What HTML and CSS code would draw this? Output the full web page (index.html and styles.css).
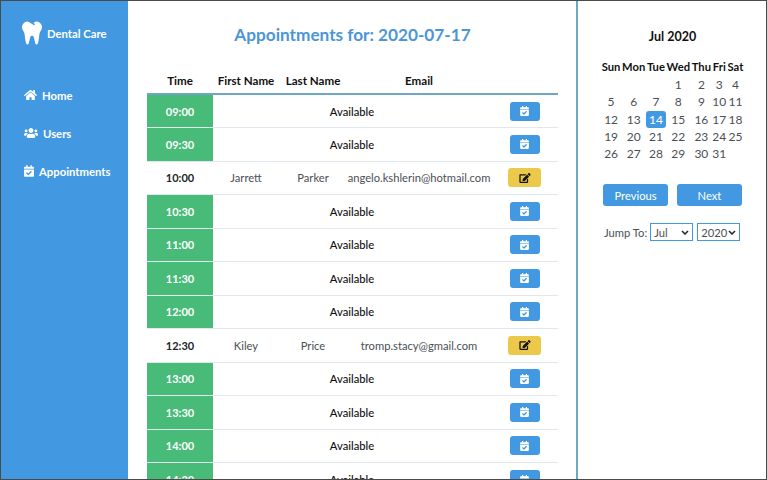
FILE: index.html
```html
<!DOCTYPE html>
<html lang="en">
<head>
  <meta charset="UTF-8">
  <meta name="viewport" content="width=device-width, initial-scale=1.0">
  <title>Dental Care - Appointments</title>
  <link rel="stylesheet" href="styles.css">
</head>
<body>
  <svg class="icon-defs" width="0" height="0">
    <symbol id="i-check" viewBox="0 0 448 512"><path d="M436 160H12c-6.6 0-12-5.4-12-12v-36c0-26.5 21.5-48 48-48h48V12c0-6.6 5.4-12 12-12h40c6.6 0 12 5.4 12 12v52h128V12c0-6.6 5.4-12 12-12h40c6.6 0 12 5.4 12 12v52h48c26.5 0 48 21.5 48 48v36c0 6.6-5.4 12-12 12zM12 192h424c6.6 0 12 5.4 12 12v260c0 26.5-21.5 48-48 48H48c-26.5 0-48-21.5-48-48V204c0-6.6 5.4-12 12-12zm333.3 95.9l-28.2-28.4c-4.7-4.7-12.3-4.7-17-.1L194 364.3l-46.1-46.5c-4.7-4.7-12.3-4.7-17-.1l-28.4 28.2c-4.7 4.7-4.7 12.3-.1 17l82.6 83.3c4.7 4.7 12.3 4.7 17 .1l143.2-142c4.7-4.7 4.7-12.3.1-17z"/></symbol>
    <symbol id="i-edit" viewBox="0 0 576 512"><path d="M402.6 83.2l90.2 90.2c3.8 3.8 3.8 10 0 13.8L274.4 405.6l-92.8 10.3c-12.4 1.4-22.9-9.1-21.5-21.5l10.3-92.8L388.8 83.2c3.8-3.8 10-3.8 13.8 0zm162-22.9l-48.8-48.8c-15.2-15.2-39.9-15.2-55.2 0l-35.4 35.4c-3.8 3.8-3.8 10 0 13.8l90.2 90.2c3.8 3.8 10 3.8 13.8 0l35.4-35.4c15.2-15.3 15.2-40 0-55.2zM384 346.2V448H64V128h229.8c3.2 0 6.2-1.3 8.5-3.5l40-40c7.6-7.6 2.2-20.5-8.5-20.5H48C21.5 64 0 85.5 0 112v352c0 26.5 21.5 48 48 48h352c26.5 0 48-21.5 48-48V306.2c0-10.7-12.9-16-20.5-8.5l-40 40c-2.2 2.3-3.5 5.3-3.5 8.5z"/></symbol>
  </svg>

  <div class="app">
    <!-- Sidebar -->
    <nav class="sidebar">
      <div class="brand">
        <svg class="brand-icon" viewBox="0 0 448 512"><path d="M443.98 96.25c-11.01-45.22-47.11-82.06-92.01-93.72-32.19-8.36-63 5.1-89.14 24.33-3.25 2.39-6.96 3.73-10.5 5.48l28.32 18.21c7.42 4.77 9.58 14.67 4.8 22.11-4.46 6.95-14.27 9.86-22.11 4.8L162.83 12.84c-20.7-10.85-43.38-16.4-66.81-10.31-44.9 11.67-81 48.5-92.01 93.72-10.13 41.62-.42 80.81 21.5 110.43 23.36 31.57 32.68 68.66 36.29 107.35 4.4 47.16 10.33 94.16 20.94 140.32l7.8 33.95c3.19 13.87 15.49 23.7 29.67 23.7 13.97 0 26.15-9.55 29.54-23.16l34.47-138.42c4.56-18.32 20.96-31.16 39.76-31.16s35.2 12.85 39.76 31.16l34.47 138.42c3.39 13.61 15.57 23.16 29.54 23.16 14.18 0 26.48-9.83 29.67-23.7l7.8-33.95c10.61-46.15 16.53-93.16 20.94-140.32 3.61-38.7 12.93-75.78 36.29-107.35 21.95-29.61 31.66-68.8 21.53-110.43z"/></svg>
        <span>Dental Care</span>
      </div>
      <a class="nav-link" href="#">
        <svg class="nav-icon" viewBox="0 0 576 512"><path d="M280.37 148.26L96 300.11V464a16 16 0 0 0 16 16l112.06-.29a16 16 0 0 0 15.92-16V368a16 16 0 0 1 16-16h64a16 16 0 0 1 16 16v95.64a16 16 0 0 0 16 16.05L464 480a16 16 0 0 0 16-16V300L295.67 148.26a12.19 12.19 0 0 0-15.3 0zM571.6 251.47L488 182.56V44.05a12 12 0 0 0-12-12h-56a12 12 0 0 0-12 12v72.61L318.47 43a48 48 0 0 0-61 0L4.34 251.47a12 12 0 0 0-1.6 16.9l25.5 31A12 12 0 0 0 45.15 301l235.22-193.74a12.19 12.19 0 0 1 15.3 0L530.9 301a12 12 0 0 0 16.9-1.6l25.5-31a12 12 0 0 0-1.7-16.93z"/></svg>
        Home
      </a>
      <a class="nav-link" href="#">
        <svg class="nav-icon nav-icon-wide" viewBox="0 0 640 512"><path d="M96 224c35.3 0 64-28.7 64-64s-28.7-64-64-64-64 28.7-64 64 28.7 64 64 64zm448 0c35.3 0 64-28.7 64-64s-28.7-64-64-64-64 28.7-64 64 28.7 64 64 64zm32 32h-64c-17.6 0-33.5 7.1-45.1 18.6 40.3 22.1 68.9 62 75.1 109.4h66c17.7 0 32-14.3 32-32v-32c0-35.3-28.7-64-64-64zm-256 0c61.9 0 112-50.1 112-112S381.9 32 320 32 208 82.1 208 144s50.1 112 112 112zm76.8 32h-8.3c-20.8 10-43.9 16-68.5 16s-47.6-6-68.5-16h-8.3C179.6 288 128 339.6 128 403.2V432c0 26.5 21.5 48 48 48h288c26.5 0 48-21.5 48-48v-28.8c0-63.6-51.6-115.2-115.2-115.2zm-223.7-13.4C161.5 263.1 145.6 256 128 256H64c-35.3 0-64 28.7-64 64v32c0 17.7 14.3 32 32 32h65.9c6.3-47.4 34.9-87.3 75.2-109.4z"/></svg>
        Users
      </a>
      <a class="nav-link" href="#">
        <svg class="nav-icon nav-icon-narrow"><use href="#i-check"/></svg>
        Appointments
      </a>
    </nav>

    <!-- Schedule -->
    <main class="schedule">
      <h1>Appointments for: 2020-07-17</h1>
      <table class="slots">
        <thead>
          <tr><th>Time</th><th>First Name</th><th>Last Name</th><th>Email</th><th></th></tr>
        </thead>
        <tbody>
          <tr><td class="time free">09:00</td><td colspan="3" class="avail">Available</td><td><button class="btn-slot"><svg><use href="#i-check"/></svg></button></td></tr>
          <tr><td class="time free">09:30</td><td colspan="3" class="avail">Available</td><td><button class="btn-slot"><svg><use href="#i-check"/></svg></button></td></tr>
          <tr><td class="time">10:00</td><td>Jarrett</td><td>Parker</td><td>angelo.kshlerin@hotmail.com</td><td><button class="btn-slot btn-edit"><svg><use href="#i-edit"/></svg></button></td></tr>
          <tr><td class="time free">10:30</td><td colspan="3" class="avail">Available</td><td><button class="btn-slot"><svg><use href="#i-check"/></svg></button></td></tr>
          <tr><td class="time free">11:00</td><td colspan="3" class="avail">Available</td><td><button class="btn-slot"><svg><use href="#i-check"/></svg></button></td></tr>
          <tr><td class="time free">11:30</td><td colspan="3" class="avail">Available</td><td><button class="btn-slot"><svg><use href="#i-check"/></svg></button></td></tr>
          <tr><td class="time free">12:00</td><td colspan="3" class="avail">Available</td><td><button class="btn-slot"><svg><use href="#i-check"/></svg></button></td></tr>
          <tr><td class="time">12:30</td><td>Kiley</td><td>Price</td><td>tromp.stacy@gmail.com</td><td><button class="btn-slot btn-edit"><svg><use href="#i-edit"/></svg></button></td></tr>
          <tr><td class="time free">13:00</td><td colspan="3" class="avail">Available</td><td><button class="btn-slot"><svg><use href="#i-check"/></svg></button></td></tr>
          <tr><td class="time free">13:30</td><td colspan="3" class="avail">Available</td><td><button class="btn-slot"><svg><use href="#i-check"/></svg></button></td></tr>
          <tr><td class="time free">14:00</td><td colspan="3" class="avail">Available</td><td><button class="btn-slot"><svg><use href="#i-check"/></svg></button></td></tr>
          <tr><td class="time free">14:30</td><td colspan="3" class="avail">Available</td><td><button class="btn-slot"><svg><use href="#i-check"/></svg></button></td></tr>
        </tbody>
      </table>
    </main>

    <!-- Calendar -->
    <aside class="calendar">
      <h2>Jul 2020</h2>
      <table class="month">
        <thead>
          <tr><th>Sun</th><th>Mon</th><th>Tue</th><th>Wed</th><th>Thu</th><th>Fri</th><th>Sat</th></tr>
        </thead>
        <tbody>
          <tr><td></td><td></td><td></td><td>1</td><td>2</td><td>3</td><td>4</td></tr>
          <tr><td>5</td><td>6</td><td>7</td><td>8</td><td>9</td><td>10</td><td>11</td></tr>
          <tr><td>12</td><td>13</td><td class="today">14</td><td>15</td><td>16</td><td>17</td><td>18</td></tr>
          <tr><td>19</td><td>20</td><td>21</td><td>22</td><td>23</td><td>24</td><td>25</td></tr>
          <tr><td>26</td><td>27</td><td>28</td><td>29</td><td>30</td><td>31</td><td></td></tr>
        </tbody>
      </table>
      <div class="month-nav">
        <button class="btn-month">Previous</button>
        <button class="btn-month">Next</button>
      </div>
      <div class="jump">
        <label for="jump-month">Jump To:</label>
        <select id="jump-month" class="jump-month"><option>Jul</option></select>
        <select class="jump-year"><option>2020</option></select>
      </div>
    </aside>
  </div>
</body>
</html>
```

FILE: styles.css
```css
:root {
  --blue: #4299e1;
  --green: #48bb78;
  --yellow: #ecc94b;
  --line: #e2e8f0;
  --text-main: #212529;
  --text-soft: #4a4f55;
}

* {
  box-sizing: border-box;
  margin: 0;
  padding: 0;
}

html,
body {
  height: 100%;
  overflow: hidden;
}

body {
  font-family: Lato, "Open Sans", sans-serif;
  font-size: 11.2px;
  color: var(--text-main);
  background-color: #fff;
}

.icon-defs {
  position: absolute;
}

.app {
  display: flex;
  height: 100%;
  overflow: hidden;
  border: 1px solid #4a4a4a;
}

/* Sidebar */
.sidebar {
  flex: 0 0 127px;
  padding-top: 20px;
  color: #fff;
  background-color: var(--blue);
}

.brand {
  display: flex;
  align-items: center;
  gap: 5px;
  margin: 0 0 31px 21px;
  font-size: 11.3px;
  font-weight: 700;
}

.brand-icon {
  width: 20px;
  height: 24px;
  fill: #fff;
}

.nav-link {
  display: flex;
  align-items: center;
  gap: 5px;
  height: 38px;
  padding-left: 23px;
  font-size: 11.3px;
  font-weight: 700;
  color: #fff;
  text-decoration: none;
}

.nav-icon {
  width: 13px;
  height: 12px;
  fill: #fff;
}

.nav-icon-wide {
  width: 14px;
}

.nav-icon-narrow {
  width: 10px;
}

/* Schedule */
.schedule {
  flex: 0 0 450px;
  padding: 0 18px 0 19px;
  border-right: 2px solid #6fa6c4;
  overflow: hidden;
}

h1 {
  height: 67px;
  padding-top: 22px;
  font-size: 17.2px;
  font-weight: 700;
  line-height: 24px;
  text-align: center;
  color: #4b96d6;
}

.slots {
  width: 411px;
  table-layout: fixed;
  border-collapse: collapse;
  text-align: center;
}

.slots th {
  height: 26px;
  font-size: 11.6px;
  font-weight: 700;
  color: #111;
  border-bottom: 2px solid #6fa6c4;
}

.slots th:nth-child(1) { width: 66px; }
.slots th:nth-child(2) { width: 66px; }
.slots th:nth-child(3) { width: 68px; }
.slots th:nth-child(4) { width: 144px; }

.slots td {
  height: 33.5px;
  color: var(--text-soft);
  border-top: 1px solid var(--line);
  vertical-align: middle;
}

.slots .time {
  font-size: 11px;
  font-weight: 700;
  color: var(--text-main);
}

.slots .free {
  color: #fff;
  background-color: var(--green);
}

.slots .avail {
  font-weight: 500;
  color: #111;
}

.btn-slot {
  display: inline-flex;
  align-items: center;
  justify-content: center;
  width: 30px;
  height: 19px;
  vertical-align: middle;
  border: none;
  border-radius: 3px;
  background-color: var(--blue);
}

.btn-slot svg {
  width: 9px;
  height: 10px;
  fill: #fff;
}

.btn-edit {
  width: 33px;
  background-color: var(--yellow);
}

.btn-edit svg {
  width: 12px;
  fill: #111;
}

/* Calendar */
.calendar {
  flex: 1;
  padding: 27px 0 0 23px;
}

h2 {
  width: 143px;
  font-size: 12.5px;
  font-weight: 700;
  line-height: 18px;
  text-align: center;
  color: #111;
}

.month {
  width: 143px;
  margin-top: 10px;
  border-collapse: collapse;
  text-align: center;
}

.month th {
  height: 20px;
  padding: 0;
  font-size: 11.2px;
  font-weight: 700;
  color: #111;
}

.month td {
  height: 17.3px;
  padding: 0;
  font-size: 12px;
  color: var(--text-soft);
}

.month .today {
  color: #fff;
  background-color: var(--blue);
  border-radius: 3px;
}

.month-nav {
  display: flex;
  gap: 9px;
  margin: 22px 0 0 2px;
}

.btn-month {
  width: 65px;
  height: 22px;
  font: inherit;
  color: #fff;
  border: none;
  border-radius: 3px;
  background-color: var(--blue);
}

.jump {
  display: flex;
  align-items: center;
  margin-top: 17px;
  padding-left: 3px;
  color: var(--text-soft);
}

.jump select {
  height: 18px;
  padding-left: 3px;
  font: inherit;
  font-size: 11.2px;
  color: var(--text-soft);
  border: 1px solid var(--blue);
  background: #fff url("data:image/svg+xml,%3Csvg xmlns='http://www.w3.org/2000/svg' width='8' height='5'%3E%3Cpath d='M1 1l3 3 3-3' fill='none' stroke='%23222' stroke-width='1.5'/%3E%3C/svg%3E") no-repeat right 3px center;
  appearance: none;
}

.jump-month {
  width: 43px;
  margin-left: 3px;
}

.jump-year {
  width: 43px;
  margin-left: 4px;
}
```
